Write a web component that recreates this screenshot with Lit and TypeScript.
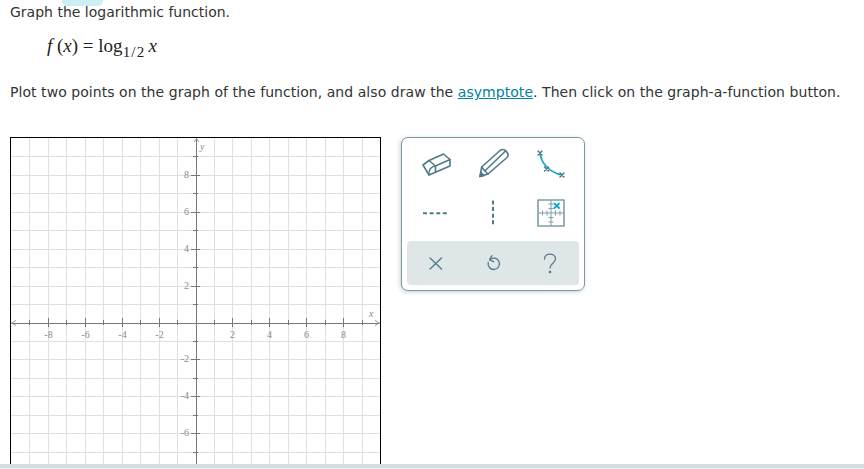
import { LitElement, html, svg, css } from "lit";
import { customElement } from "lit/decorators.js";

const COLS = [29, 48, 66, 85, 103, 122, 140, 159, 177, 196, 214, 232, 251, 269, 288, 306, 325, 343, 362];
const ROWS = [156, 175, 193, 212, 230, 249, 267, 286, 304, 323, 341, 359, 378, 396, 415, 433, 452];
const AXIS_X = 196;
const AXIS_Y = 323;

@customElement("coord-graph")
export class CoordGraph extends LitElement {
  static styles = css`
    :host {
      display: block;
      width: 372px;
      height: 327px;
    }
    svg {
      display: block;
    }
    .grid {
      stroke: #e0e0e0;
      stroke-width: 1;
      shape-rendering: crispEdges;
    }
    .axis {
      stroke: #777;
      stroke-width: 1;
      fill: none;
      shape-rendering: crispEdges;
    }
    .arrow {
      stroke: #999;
      stroke-width: 1;
      fill: none;
    }
    .frame {
      stroke: #000;
      stroke-width: 1;
      shape-rendering: crispEdges;
    }
    text {
      font-family: "Liberation Serif", serif;
      font-size: 10px;
      fill: #8a8a8a;
    }
    .name {
      font-style: italic;
    }
  `;

  render() {
    const xTicks = COLS.map((x, i) => {
      if (x === AXIS_X) return null;
      const major = (i - 9) % 2 === 0;
      return svg`<line class="axis" x1=${x + 0.5} x2=${x + 0.5} y1=${major ? 318 : 320} y2=${major ? 327 : 325}></line>`;
    });
    const yTicks = ROWS.map((y, i) => {
      if (y === AXIS_Y) return null;
      const major = (i - 9) % 2 === 0;
      return svg`<line class="axis" x1=${major ? 191 : 193} x2=${major ? 200 : 198} y1=${y + 0.5} y2=${y + 0.5}></line>`;
    });
    const xLabels = COLS.map((x, i) => {
      const n = i - 9;
      if (n === 0 || n % 2 !== 0) return null;
      return svg`<text x=${x + 0.5} y="338" text-anchor="middle">${n < 0 ? "-" + -n : n}</text>`;
    });
    const yLabels = ROWS.map((y, i) => {
      const n = 9 - i;
      if (n === 0 || n % 2 !== 0) return null;
      return svg`<text x="189" y=${y + 3} text-anchor="end">${n < 0 ? "-" + -n : n}</text>`;
    });

    return html`<svg width="372" height="327" viewBox="10 137 372 327">
      ${COLS.map((x) => svg`<line class="grid" x1=${x + 0.5} x2=${x + 0.5} y1="137" y2="464"></line>`)}
      ${ROWS.map((y) => svg`<line class="grid" x1="10" x2="381" y1=${y + 0.5} y2=${y + 0.5}></line>`)}
      <line class="axis" x1="196.5" x2="196.5" y1="138" y2="464"></line>
      <line class="axis" x1="11" x2="380" y1="323.5" y2="323.5"></line>
      ${xTicks}${yTicks}${xLabels}${yLabels}
      <path class="arrow" d="M194 142 196.5 138.5 199 142"></path>
      <path class="arrow" d="M16 320.5 11.5 323 16 325.5"></path>
      <path class="arrow" d="M375 320.5 379.5 323 375 325.5"></path>
      <text class="name" x="200" y="150">y</text>
      <text class="name" x="369" y="317">x</text>
      <line class="frame" x1="10" x2="381" y1="137.5" y2="137.5"></line>
      <line class="frame" x1="10.5" x2="10.5" y1="137" y2="464"></line>
      <line class="frame" x1="380.5" x2="380.5" y1="137" y2="464"></line>
    </svg>`;
  }
}

@customElement("tool-panel")
export class ToolPanel extends LitElement {
  static styles = css`
    :host {
      display: block;
      width: 184px;
      height: 154px;
      box-sizing: border-box;
      padding: 3px 5px 4px;
      background: #fff;
      border: 1px solid #7d9aa3;
      border-radius: 7px;
      box-shadow: -1px 1px 4px rgba(90, 125, 135, 0.35);
    }
    .tools {
      display: grid;
      grid-template-columns: repeat(3, 1fr);
      grid-auto-rows: 48px;
      height: 100px;
    }
    .actions {
      display: grid;
      grid-template-columns: repeat(3, 1fr);
      height: 44px;
      background: #dfe6e8;
      border-radius: 4px;
    }
    .cell {
      display: flex;
      align-items: center;
      justify-content: center;
    }
    svg {
      display: block;
      fill: none;
      stroke: #4f7a87;
      stroke-width: 1.6;
      stroke-linecap: round;
      stroke-linejoin: round;
    }
    .curve {
      stroke: #10a9c7;
      stroke-width: 1.8;
    }
    .mark {
      stroke: #58757f;
      stroke-width: 1.5;
    }
    .hot {
      stroke: #10a9c7;
      stroke-width: 1.8;
    }
    .box {
      stroke: #7f9da6;
      stroke-width: 1.6;
      stroke-linecap: butt;
    }
    .dash {
      stroke-dasharray: 4 2.6;
      stroke-linecap: butt;
      stroke-width: 2;
    }
    .thin {
      stroke-width: 1;
    }
    .act {
      stroke-width: 1.3;
    }
  `;

  render() {
    return html`<div class="tools">
        <div class="cell">
          <svg width="36" height="30" viewBox="416 150 36 30">
            <path d="M421 165 427 160.5 441.5 154 448 159.5V166L427 175Z"></path>
            <path d="M427 160.5 433.5 166 448 159.5M433.5 166V171.5"></path>
            <path d="M427 175C426.5 170 429 166.5 433.5 166"></path>
          </svg>
        </div>
        <div class="cell">
          <svg width="36" height="34" viewBox="475 148 36 34">
            <path d="M481.7 167 500 150.5Q503 148.5 505.5 150.5L507.5 153Q509 155.5 507 157.5L488 174 480 176.5Z"></path>
            <path d="M481.7 167 484.8 171 488 174M484.8 171 505.5 151"></path>
            <path d="M480 176.5 481 172.5 484 175.5Z" fill="#4f7a87"></path>
          </svg>
        </div>
        <div class="cell">
          <svg width="34" height="32" viewBox="534 149 34 32">
            <path class="curve" d="M541 153C542 162 549 172 563 175"></path>
            <path class="mark" d="M539 151 543 155M543 151 539 155M545.5 167 549.5 171M549.5 167 545.5 171M561 173 565 177M565 173 561 177"></path>
          </svg>
        </div>
        <div class="cell">
          <svg width="28" height="6" viewBox="421 210 28 6">
            <line class="dash" x1="422" x2="447" y1="213.3" y2="213.3"></line>
          </svg>
        </div>
        <div class="cell">
          <svg width="6" height="28" viewBox="490 200 6 28">
            <line class="dash" x1="493" x2="493" y1="201.5" y2="227"></line>
          </svg>
        </div>
        <div class="cell">
          <svg width="30" height="30" viewBox="536 198.5 30 30">
            <rect class="box" x="539" y="200.5" width="26" height="26"></rect>
            <path class="box thin" d="M552 200.5V226.5M539 213.5H565"></path>
            <path class="box thin" d="M543.5 211V216M548 211V216M556.5 211V216M561 211V216M549.5 204.5H554.5M549.5 209H554.5M549.5 218H554.5M549.5 222.5H554.5"></path>
            <path class="hot" d="M555.5 204 560 208.5M560 204 555.5 208.5"></path>
          </svg>
        </div>
      </div>
      <div class="actions">
        <div class="cell">
          <svg class="act" width="16" height="16" viewBox="428 255 16 16">
            <path d="M430 258 441.5 269M441.5 258 430 269"></path>
          </svg>
        </div>
        <div class="cell">
          <svg class="act" width="18" height="22" viewBox="484 252 18 22">
            <path d="M490 259.5A5.7 5.7 0 1 1 488.2 262.5"></path>
            <path d="M492 255.7 489.5 259.7 493.5 261.7"></path>
          </svg>
        </div>
        <div class="cell">
          <svg class="act" width="16" height="24" viewBox="542 251 16 24">
            <path d="M544.5 259C544.5 252.5 555.5 252.5 555.5 259 555.5 263 550 263.5 550 268"></path>
            <circle cx="550" cy="272" r="0.7"></circle>
          </svg>
        </div>
      </div>`;
  }
}

@customElement("app-root")
export class AppRoot extends LitElement {
  static styles = css`
    :host {
      display: block;
      position: relative;
      width: 864px;
      height: 469px;
      overflow: hidden;
      background: #fff;
      font-family: "DejaVu Sans", sans-serif;
      font-size: 14px;
      color: #333;
    }
    .tab {
      position: absolute;
      left: 62px;
      top: 0;
      width: 41px;
      height: 6px;
      background: #cdeef3;
      border-radius: 0 0 5px 5px;
    }
    .page {
      position: relative;
      display: flex;
      flex-direction: column;
      height: 469px;
      padding-left: 10px;
      box-sizing: border-box;
    }
    .line {
      height: 16px;
      line-height: 16px;
      white-space: nowrap;
    }
    .prompt {
      margin-top: 4px;
    }
    .formula {
      display: flex;
      align-items: baseline;
      margin: 14px 0 0 37px;
      height: 24px;
      font-family: "Liberation Serif", serif;
      font-size: 19px;
      line-height: 24px;
      color: #222;
      white-space: pre;
    }
    .formula i {
      font-style: italic;
    }
    .formula sub {
      font-size: 15px;
      letter-spacing: 1.2px;
      line-height: 0;
      vertical-align: baseline;
      position: relative;
      top: 5px;
    }
    .formula .arg {
      margin-left: 3px;
    }
    .plot {
      margin-top: 26px;
      letter-spacing: 0.05px;
    }
    a {
      color: #00829b;
      text-decoration: underline;
    }
    .work {
      display: flex;
      align-items: flex-start;
      margin-top: 37px;
      height: 327px;
    }
    tool-panel {
      margin-left: 19px;
    }
    .strip {
      height: 4px;
      margin-left: -10px;
      background: #d3dfe3;
      border-bottom: 1px solid #eef2f4;
    }
  `;

  render() {
    return html`<div class="tab"></div>
      <div class="page">
        <div class="line prompt">Graph the logarithmic function.</div>
        <div class="formula">
          <i>f</i><span> (</span><i>x</i><span>) = log</span><sub>1/2</sub><i class="arg">x</i>
        </div>
        <div class="line plot">
          Plot two points on the graph of the function, and also draw the
          <a href="#">asymptote</a>. Then click on the graph-a-function button.
        </div>
        <div class="work">
          <coord-graph></coord-graph>
          <tool-panel></tool-panel>
        </div>
        <div class="strip"></div>
      </div>`;
  }
}
